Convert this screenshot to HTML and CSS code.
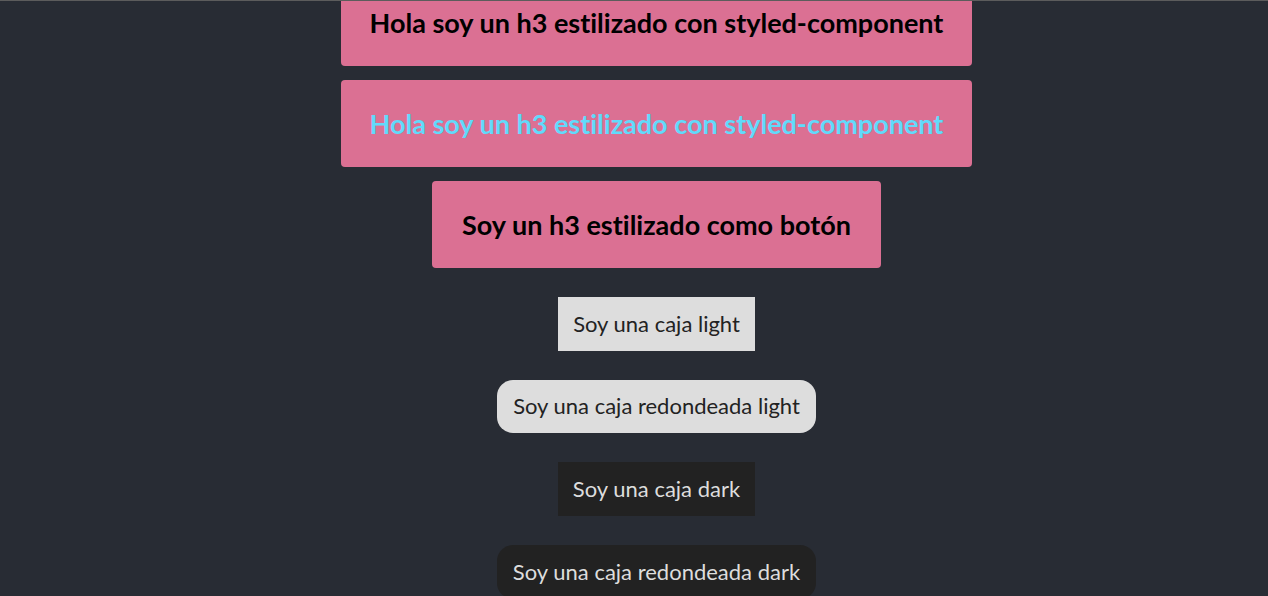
FILE: index.html
```html
<!DOCTYPE html>
<html lang="es">
<head>
  <meta charset="UTF-8">
  <title>Styled Components</title>
  <meta name="viewport" content="width=device-width, initial-scale=1.0"/>
  <link rel="stylesheet" href="styles.css">
</head>
<body>
  <div class="app">
    <h3 class="title">Hola soy un h3 estilizado con styled-component</h3>
    <h3 class="title title-react">Hola soy un h3 estilizado con styled-component</h3>
    <h3 class="title title-button">Soy un h3 estilizado como botón</h3>

    <div class="box box-light">Soy una caja light</div>
    <div class="box box-light box-round">Soy una caja redondeada light</div>
    <div class="box box-dark">Soy una caja dark</div>
    <div class="box box-dark box-round">Soy una caja redondeada dark</div>
  </div>
</body>
</html>
```

FILE: styles.css
```css
body {
  margin: 0;
  border-top: 1px solid #5c5c5c;
  background-color: #282c34;
  font-family: 'Segoe UI', Lato, 'Noto Sans', sans-serif;
  font-variant-ligatures: none;
  overflow: hidden;
}
.app {
  display: flex;
  flex-direction: column;
  align-items: center;
  margin-top: -22px;
  padding-left: 45px;
}
.title {
  box-sizing: border-box;
  width: 631px;
  margin: 0 0 14px;
  padding: 27.5px 0;
  font-size: 27px;
  line-height: 32px;
  font-weight: bold;
  text-align: center;
  color: black;
  background-color: #db7093;
  border-radius: 4px;
}
.title-react {
  color: #61dafb;
}
.title-button {
  width: 449px;
  margin-bottom: 29px;
}
.box {
  box-sizing: border-box;
  width: 197px;
  margin-bottom: 29px;
  padding: 13.5px 0;
  font-size: 22px;
  line-height: 26.67px;
  text-align: center;
}
.box-light {
  background-color: #dddddd;
  color: #222222;
}
.box-dark {
  background-color: #222222;
  color: #dddddd;
}
.box-round {
  width: 319px;
  border-radius: 16px;
}
```
